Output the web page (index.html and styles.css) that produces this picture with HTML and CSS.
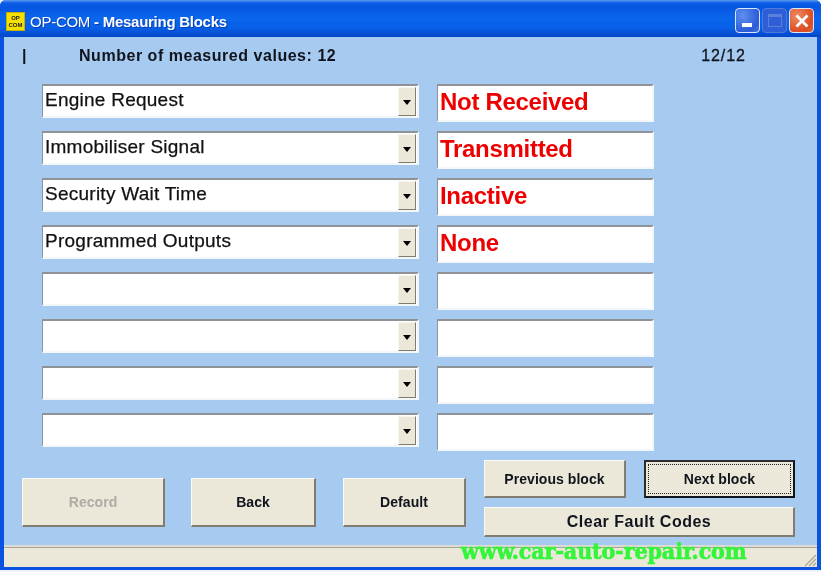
FILE: index.html
```html
<!DOCTYPE html>
<html lang="en">
<head>
<meta charset="utf-8">
<title>OP-COM - Mesauring Blocks</title>
<link rel="stylesheet" href="styles.css">
</head>
<body>
<div class="window">
  <header class="titlebar">
    <div class="app-icon"><span>OP</span><span>COM</span></div>
    <div class="title"><span class="title-app">OP-COM</span> - Mesauring Blocks</div>
    <div class="controls">
      <div class="ctl ctl-min"><i></i></div>
      <div class="ctl ctl-max"><i></i></div>
      <div class="ctl ctl-close">
        <svg width="18" height="18" viewBox="0 0 18 18"><path d="M3.5 3.5l11 11M14.5 3.5l-11 11" stroke="#fff" stroke-width="2.8" fill="none"/></svg>
      </div>
    </div>
  </header>
  <main class="content">
    <div class="info">
      <span class="cursor">|</span>
      <span class="count">Number of measured values: 12</span>
      <span class="page">12/12</span>
    </div>
    <div class="rows">
      <div class="row"><div class="combo"><span class="combo-text">Engine Request</span><span class="arrow"></span></div><div class="value">Not Received</div></div>
      <div class="row"><div class="combo"><span class="combo-text">Immobiliser Signal</span><span class="arrow"></span></div><div class="value">Transmitted</div></div>
      <div class="row"><div class="combo"><span class="combo-text">Security Wait Time</span><span class="arrow"></span></div><div class="value">Inactive</div></div>
      <div class="row"><div class="combo"><span class="combo-text">Programmed Outputs</span><span class="arrow"></span></div><div class="value">None</div></div>
      <div class="row"><div class="combo"><span class="combo-text"></span><span class="arrow"></span></div><div class="value"></div></div>
      <div class="row"><div class="combo"><span class="combo-text"></span><span class="arrow"></span></div><div class="value"></div></div>
      <div class="row"><div class="combo"><span class="combo-text"></span><span class="arrow"></span></div><div class="value"></div></div>
      <div class="row"><div class="combo"><span class="combo-text"></span><span class="arrow"></span></div><div class="value"></div></div>
    </div>
    <div class="actions">
      <button class="btn btn-record" disabled>Record</button>
      <button class="btn btn-back">Back</button>
      <button class="btn btn-default">Default</button>
      <div class="block-group">
        <div class="block-nav">
          <button class="btn btn-prev">Previous block</button>
          <button class="btn btn-next"><span>Next block</span></button>
        </div>
        <button class="btn btn-clear">Clear Fault Codes</button>
      </div>
    </div>
  </main>
  <footer class="status">
    <svg class="grip" width="14" height="14" viewBox="0 0 14 14"><path d="M13 2L2 13M13 6L6 13M13 10L10 13" stroke="#a8a496" stroke-width="1.2" fill="none"/></svg>
  </footer>
  <div class="watermark">www.car-auto-repair.com</div>
</div>
</body>
</html>
```
FILE: styles.css
```css
* { box-sizing: border-box; }
html, body { margin: 0; padding: 0; background: #eef3f8; }
body { width: 821px; height: 572px; overflow: hidden; font-family: "Liberation Sans", Arial, sans-serif; }

.window {
  position: relative;
  width: 821px;
  height: 570px;
  display: flex;
  flex-direction: column;
  background: #0a52e0;
  border-radius: 6px 6px 0 0;
  padding: 0 4px 3px 4px;
  filter: blur(0.35px);
}

.titlebar {
  height: 37px;
  margin: 0 -4px;
  padding: 6px 7px 0 6px;
  display: flex;
  align-items: flex-start;
  gap: 5px;
  border-radius: 6px 6px 0 0;
  background: linear-gradient(#5a9cf0 0, #0a5ce6 3px, #0656e2 8px, #0a66ec 18px, #0860e8 28px, #0448cc 36px);
}
.app-icon {
  width: 19px;
  height: 19px;
  margin-top: 6px;
  background: #f5e000;
  border: 1px solid #c8b000;
  display: flex;
  flex-direction: column;
  align-items: center;
  justify-content: center;
  color: #222;
  font-size: 6px;
  font-weight: 700;
  line-height: 7px;
}
.title {
  margin-top: 6px;
  color: #fff;
  font-size: 15px;
  font-weight: 700;
  line-height: 20px;
  letter-spacing: -0.26px;
  text-shadow: 1px 1px 0 #0a3fb0;
}
.title-app { font-weight: 400; }
.controls { margin-left: auto; margin-top: 2px; display: flex; gap: 2px; }
.ctl {
  width: 25px;
  height: 25px;
  border: 1px solid #dce6fa;
  border-radius: 4px;
  position: relative;
}
.ctl-min { background: radial-gradient(circle at 30% 30%, #5f8ff0, #2a5cd8 70%, #4a78e0); }
.ctl-min i { position: absolute; left: 6px; bottom: 5px; width: 10px; height: 4px; background: #fff; }
.ctl-max { background: #2f5fd6; border-color: #4f7ade; }
.ctl-max i { position: absolute; left: 5px; top: 5px; width: 14px; height: 13px; border: 1px solid #5a80da; border-top-width: 3px; }
.ctl-close { background: radial-gradient(circle at 30% 30%, #ee8a60, #dc4c22 70%, #d66a48); display: flex; align-items: center; justify-content: center; }

.content {
  flex: 1;
  background: #a6caf0;
  display: flex;
  flex-direction: column;
  padding: 0 0 0 18px;
  min-height: 0;
}
.info {
  height: 47px;
  padding-top: 9px;
  display: flex;
  align-items: flex-start;
  font-size: 16px;
  line-height: 20px;
  font-weight: 700;
  color: #10141c;
}
.cursor { width: 57px; }
.count { letter-spacing: 0.53px; }
.page { margin-left: 365px; font-weight: 400; letter-spacing: 0.9px; -webkit-text-stroke: 0.3px #10141c; }

.rows { display: flex; flex-direction: column; gap: 9px; padding-left: 20px; }
.row { display: flex; gap: 18px; height: 38px; }
.combo {
  width: 377px;
  height: 34px;
  background: #fff;
  border: 2px solid;
  border-width: 2px 2px 2px 1px;
  border-color: #8f9296 #f4f7f9 #f4f7f9 #8f9296;
  display: flex;
  align-items: center;
  padding: 0 1px 0 1px;
}
.combo-text {
  flex: 1;
  font-size: 19px;
  line-height: 30px;
  padding-left: 1px;
  letter-spacing: 0.25px;
  color: #111;
  margin-top: -2px;
  -webkit-text-stroke: 0.25px #111;
}
.arrow {
  width: 18px;
  height: 29px;
  background: #ebe7d9;
  border: 1px solid;
  border-color: #f8f6ee #807c70 #807c70 #f8f6ee;
  position: relative;
}
.arrow::after {
  content: "";
  position: absolute;
  left: 4px;
  top: 12px;
  border-left: 4.5px solid transparent;
  border-right: 4.5px solid transparent;
  border-top: 5px solid #000;
}
.value {
  width: 217px;
  height: 38px;
  background: #fff;
  border: 2px solid;
  border-width: 2px 2px 2px 1px;
  border-color: #8f9296 #f4f7f9 #f4f7f9 #8f9296;
  color: #ee0000;
  font-size: 24px;
  font-weight: 700;
  line-height: 32px;
  padding-left: 2px;
  letter-spacing: -0.3px;
}

.actions {
  display: flex;
  align-items: flex-start;
  margin-top: 9px;
  position: relative;
}
.btn {
  font-family: inherit;
  background: #ebe7d9;
  border: 1px solid;
  border-color: #fbfaf4 #807c70 #807c70 #fbfaf4;
  border-width: 1px 2px 2px 1px;
  color: #10141c;
  font-size: 14px;
  font-weight: 700;
  padding: 0;
  letter-spacing: 0.05px;
}
.btn-record { width: 143px; height: 49px; margin-top: 18px; color: #aeaca4; font-weight: 700; }
.btn-back { width: 125px; height: 49px; margin: 18px 0 0 26px; }
.btn-default { width: 123px; height: 49px; margin: 18px 0 0 27px; }
.block-group { margin-left: 18px; width: 311px; display: flex; flex-direction: column; gap: 9px; }
.block-nav { display: flex; justify-content: space-between; }
.btn-prev { width: 142px; height: 38px; }
.btn-next {
  width: 151px;
  height: 38px;
  border: 2px solid #10141c;
  border-color: #2a2c30 #10141c #10141c #2a2c30;
  padding: 2px;
}
.btn-next span {
  display: flex;
  height: 100%;
  align-items: center;
  justify-content: center;
  border: 1px dotted #222;
}
.btn-clear { width: 311px; height: 30px; font-size: 16px; letter-spacing: 0.5px; }

.status {
  height: 22px;
  margin-top: auto;
  background: #ebe7d9;
  border-top: 2px solid #dcdcd4;
  box-shadow: inset 0 1px 0 #a9a698;
  position: relative;
  display: flex;
  justify-content: flex-end;
  align-items: flex-end;
}
.watermark {
  position: absolute;
  left: 461px;
  top: 536px;
  color: #33f53a;
  font-family: "DejaVu Serif Condensed", "DejaVu Serif", serif;
  font-weight: 700;
  font-size: 23px;
  line-height: 30px;
  letter-spacing: -0.12px;
  white-space: nowrap;
  -webkit-text-stroke: 0.6px #33f53a;
}
```
